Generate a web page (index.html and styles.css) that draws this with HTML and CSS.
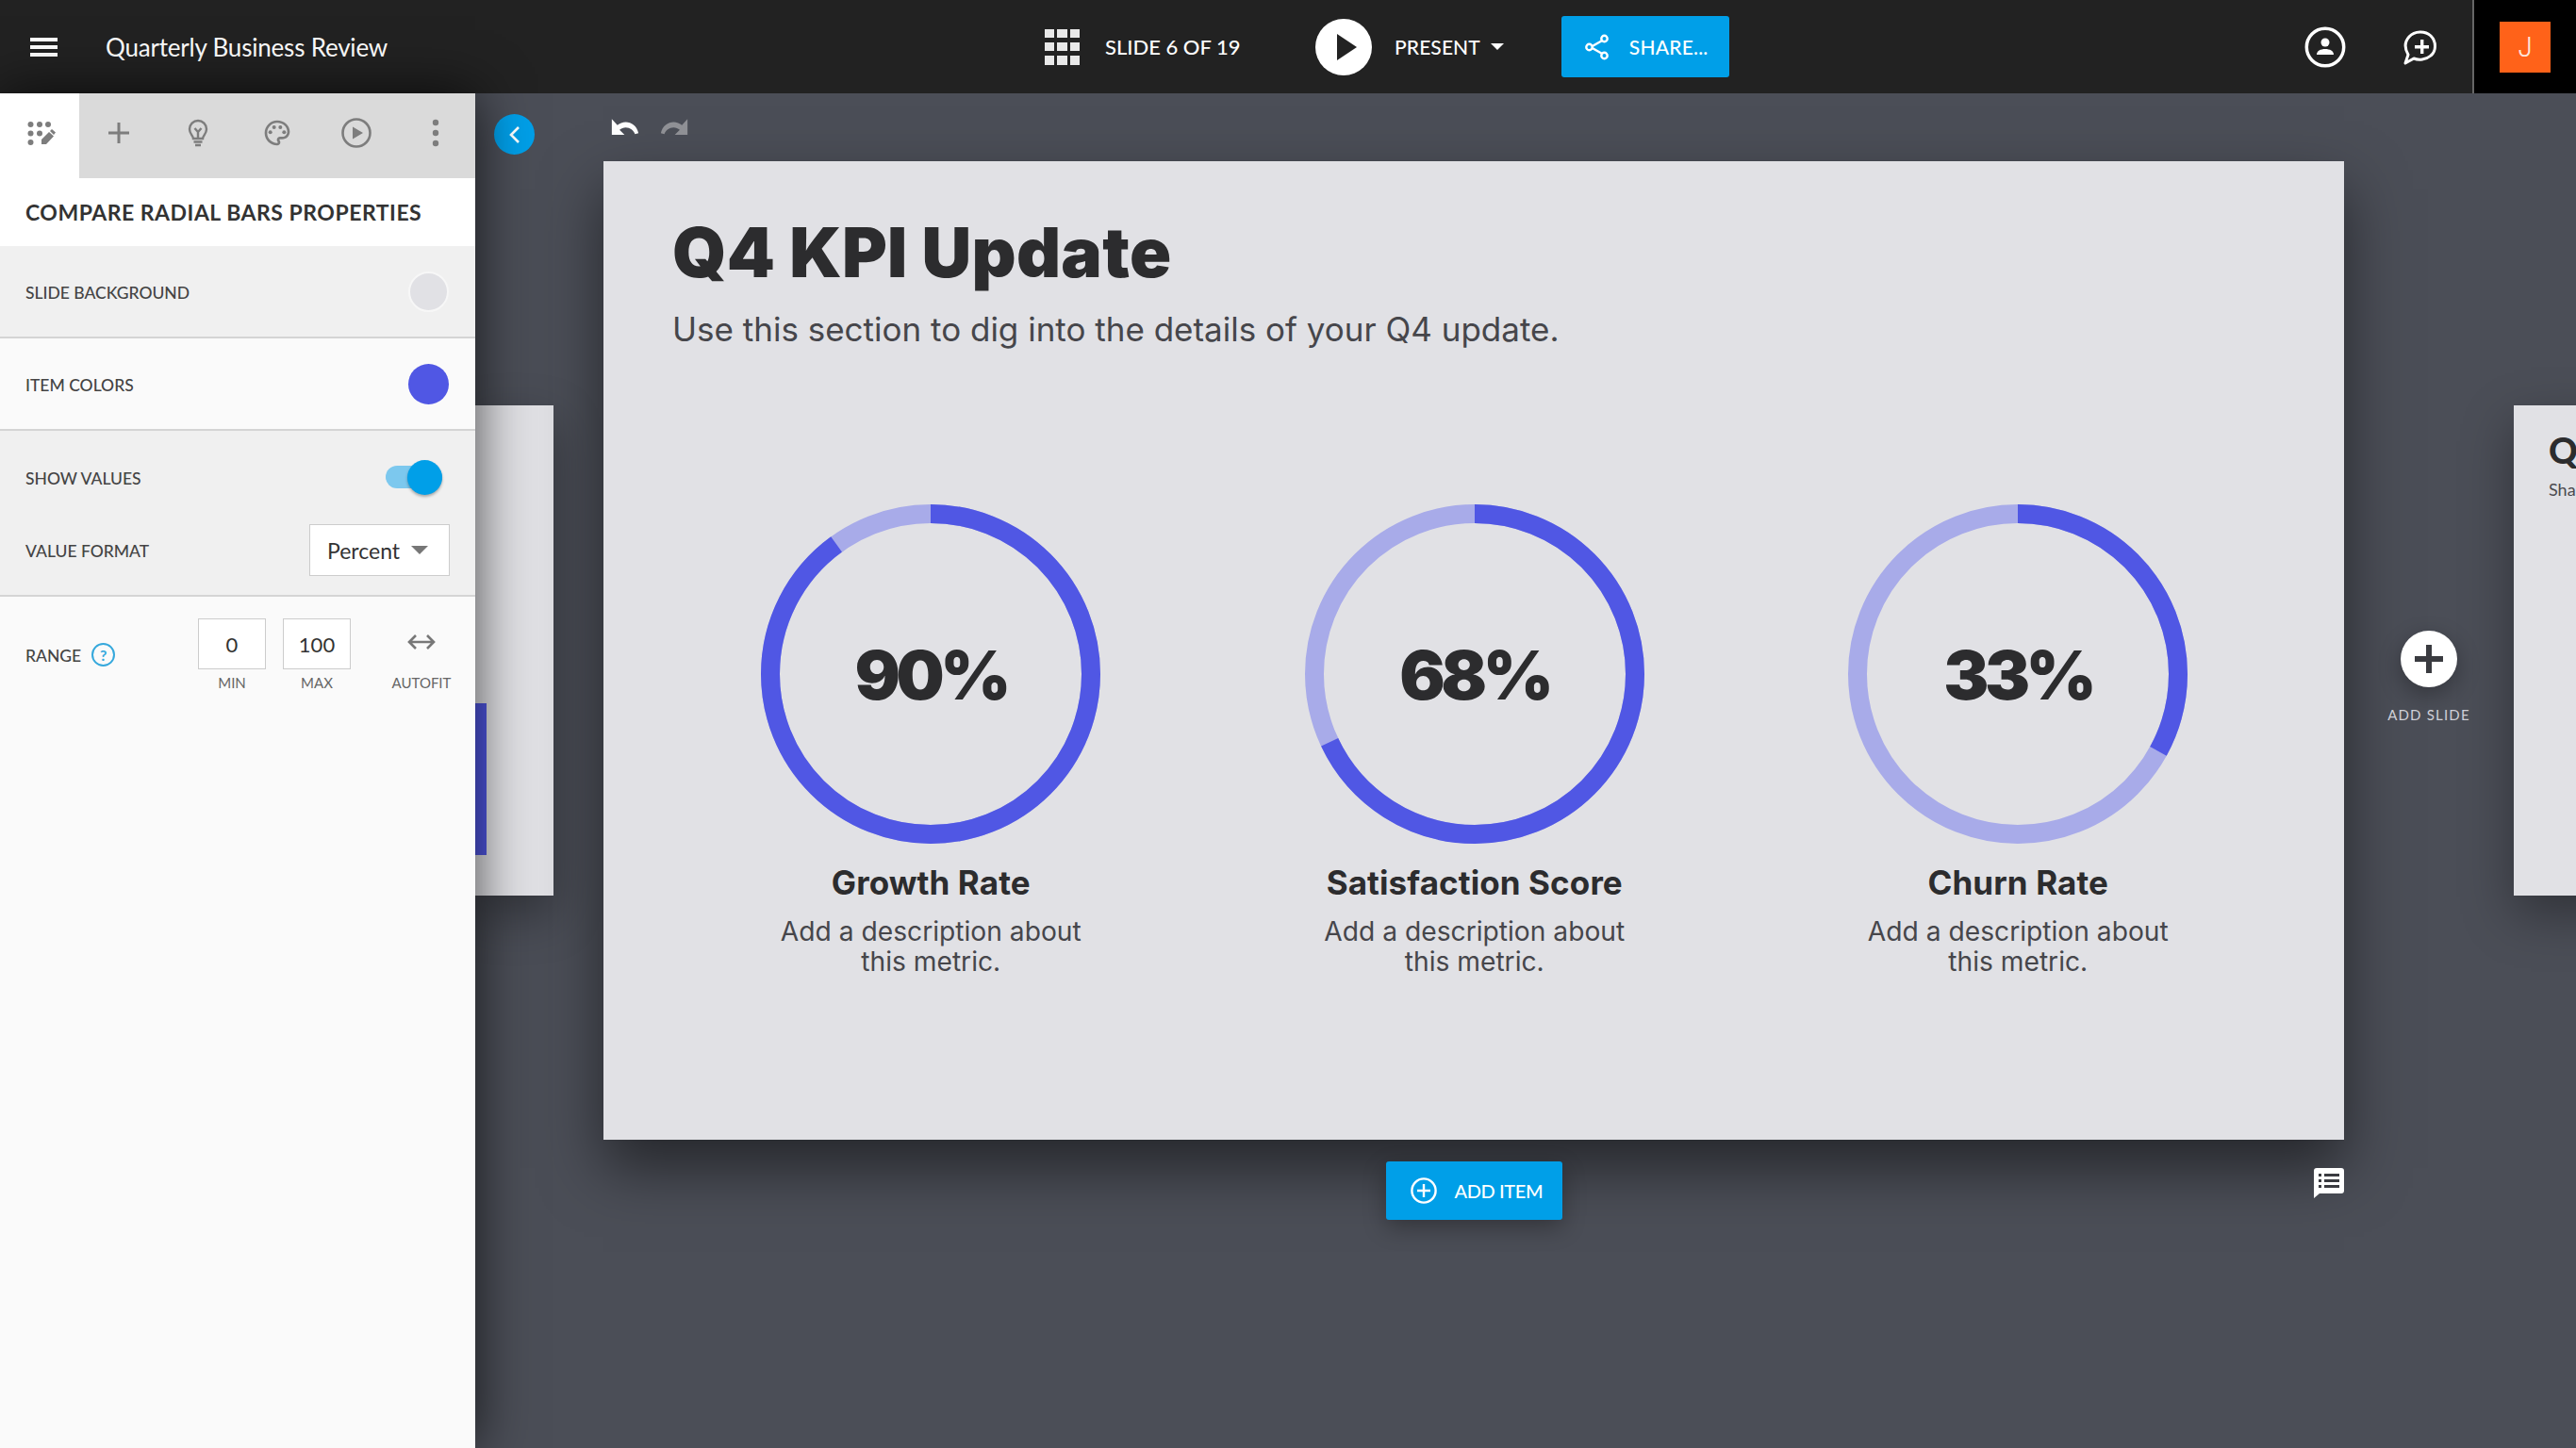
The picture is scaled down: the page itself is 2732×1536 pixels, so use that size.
FILE: index.html
```html
<!DOCTYPE html>
<html lang="en">
  <head>
    <meta charset="UTF-8" />
    <title>Quarterly Business Review</title>
    <link rel="stylesheet" href="styles.css">
  </head>

  <body>
    <header class="topbar">
      <div class="topbar-left">
        <svg class="menu-icon" viewBox="0 0 29 20"><path d="M0 0h29v4H0zM0 8h29v4H0zM0 16h29v4H0z" fill="#fff"/></svg>
        <span class="deck-title">Quarterly Business Review</span>
      </div>

      <div class="topbar-center">
        <div class="slide-grid"><i></i><i></i><i></i><i></i><i></i><i></i><i></i><i></i><i></i></div>
        <span class="slide-count">SLIDE 6 OF 19</span>
        <div class="play-circle">
          <svg viewBox="0 0 60 60"><path d="M23 16l21 14-21 14z" fill="#222"/></svg>
        </div>
        <span class="present-label">PRESENT</span>
        <span class="caret caret-white"></span>
        <button class="share-btn">
          <svg viewBox="0 0 28 28" fill="none" stroke="#fff" stroke-width="2.4">
            <path d="M21 6L7 14l14 8"/>
            <circle cx="21.500" cy="5" r="3.200" fill="#009fe8"/>
            <circle cx="5.500" cy="14" r="3.200" fill="#009fe8"/>
            <circle cx="21.500" cy="23" r="3.200" fill="#009fe8"/>
          </svg>
          SHARE...
        </button>
      </div>

      <div class="topbar-right">
        <svg class="user-icon" viewBox="0 0 44 44">
          <circle cx="22" cy="22" r="19.700" fill="none" stroke="#fff" stroke-width="3.500"/>
          <circle cx="22" cy="17" r="4.500" fill="#fff"/>
          <path d="M13 30c0-4 4-6 9-6s9 2 9 6z" fill="#fff"/>
        </svg>
        <svg class="chat-icon" viewBox="0 0 40 38">
          <path d="M3 36l3-9C2 20 2.500 13 7 8c6-6.500 17-6.500 23-1 6 6 6 16 0 21-5 4.500-13 5-18 3z" fill="none" stroke="#fff" stroke-width="3" stroke-linejoin="round"/>
          <path d="M19 11h3.400v6H28v3.400h-5.600V26H19v-5.600h-6V17h6z" fill="#fff"/>
        </svg>
        <div class="account">
          <div class="avatar">J</div>
        </div>
      </div>
    </header>

    <div class="workspace">
      <aside class="sidebar">
        <nav class="tabs">
          <div class="tab active">
            <svg viewBox="0 0 32 32" fill="#7d7d7d">
              <circle cx="6.500" cy="7" r="3"/><circle cx="16" cy="7" r="3"/><circle cx="25" cy="7" r="3"/>
              <circle cx="6.500" cy="16.500" r="3"/><circle cx="16" cy="16.500" r="3"/>
              <circle cx="6.500" cy="26" r="3"/>
              <path d="M18 28v-5l8-8 5 4.500-8 8.500zM27 14l2-2 4 3.500-2 2.500z"/>
            </svg>
          </div>
          <div class="tab">
            <svg viewBox="0 0 32 32"><path d="M14.500 5h3v9.500H27v3h-9.500V27h-3v-9.500H5v-3h9.500z" fill="#7d7d7d"/></svg>
          </div>
          <div class="tab">
            <svg viewBox="0 0 32 32" fill="none" stroke="#7d7d7d" stroke-width="2.400">
              <path d="M11 22c0-3-4-5-4-10a9 9 0 0 1 18 0c0 5-4 7-4 10z"/>
              <path d="M12.500 11l3.500 4 3.500-4M16 15v7"/>
              <path d="M11.500 25.500h9M13 29h6"/>
            </svg>
          </div>
          <div class="tab">
            <svg viewBox="0 0 24 24" fill="#7d7d7d">
              <path d="M12 22C6.490 22 2 17.510 2 12S6.490 2 12 2s10 4.040 10 9c0 3.310-2.690 6-6 6h-1.770c-.28 0-.5.22-.5.5 0 .12.05.23.13.33.41.47.64 1.060.64 1.670 0 1.380-1.120 2.500-2.500 2.500zm0-18c-4.410 0-8 3.590-8 8s3.590 8 8 8c.28 0 .5-.22.5-.5 0-.16-.08-.28-.14-.35-.41-.46-.63-1.050-.63-1.650 0-1.380 1.120-2.500 2.500-2.500H16c2.210 0 4-1.790 4-4 0-3.860-3.590-7-8-7z"/>
              <circle cx="6.500" cy="11.500" r="1.500"/><circle cx="9.500" cy="7.500" r="1.500"/>
              <circle cx="14.500" cy="7.500" r="1.500"/><circle cx="17.500" cy="11.500" r="1.500"/>
            </svg>
          </div>
          <div class="tab">
            <svg viewBox="0 0 32 32">
              <circle cx="16" cy="16" r="14.500" fill="none" stroke="#7d7d7d" stroke-width="2.600"/>
              <path d="M12 9.500l11 6.500-11 6.500z" fill="#7d7d7d"/>
            </svg>
          </div>
          <div class="tab">
            <svg viewBox="0 0 32 32" fill="#7d7d7d"><circle cx="16" cy="5" r="3.200"/><circle cx="16" cy="16" r="3.200"/><circle cx="16" cy="27" r="3.200"/></svg>
          </div>
        </nav>

        <h2 class="panel-title">COMPARE RADIAL BARS PROPERTIES</h2>

        <div class="section shaded">
          <div class="row">
            <span class="label">SLIDE BACKGROUND</span>
            <span class="swatch swatch-bg"></span>
          </div>
        </div>

        <div class="section">
          <div class="row">
            <span class="label">ITEM COLORS</span>
            <span class="swatch swatch-item"></span>
          </div>
        </div>

        <div class="section shaded section-values">
          <div class="row row-toggle">
            <span class="label">SHOW VALUES</span>
            <span class="toggle"><span class="knob"></span></span>
          </div>
          <div class="row row-format">
            <span class="label">VALUE FORMAT</span>
            <div class="select">Percent <span class="caret caret-gray"></span></div>
          </div>
        </div>

        <div class="section section-range">
          <div class="range-label">
            <span class="label">RANGE</span>
            <span class="help">?</span>
          </div>
          <div class="range-field range-min">
            <div class="num-input">0</div>
            <span class="mini-label">MIN</span>
          </div>
          <div class="range-field">
            <div class="num-input">100</div>
            <span class="mini-label">MAX</span>
          </div>
          <div class="range-field range-autofit">
            <svg viewBox="0 0 30 18" fill="none" stroke="#777" stroke-width="2.600">
              <path d="M2 9h26M9 2L2 9l7 7M21 2l7 7-7 7"/>
            </svg>
            <span class="mini-label">AUTOFIT</span>
          </div>
        </div>
      </aside>

      <main class="stage">
        <div class="stage-tools">
          <div class="collapse-btn">
            <svg viewBox="0 0 14 22" fill="none" stroke="#fff" stroke-width="2.600"><path d="M11 3L3 11l8 8"/></svg>
          </div>
          <svg class="history-icon" viewBox="0 0 24 14"><path d="M12.500 3.500c-2.650 0-5.050.99-6.900 2.600L1 1v13h10.500L7.400 9.900c1.390-1.160 3.160-1.900 5.100-1.900 3.540 0 6.550 2.310 7.600 5.500l2.900-.9C21.600 6.500 17.150 3.500 12.500 3.500z" fill="#fff"/></svg>
          <svg class="history-icon redo" viewBox="0 0 24 14"><path d="M12.500 3.500c-2.650 0-5.050.99-6.900 2.600L1 1v13h10.500L7.400 9.900c1.390-1.160 3.160-1.900 5.100-1.900 3.540 0 6.550 2.310 7.600 5.500l2.900-.9C21.600 6.500 17.150 3.500 12.500 3.500z" fill="#8f9095"/></svg>
        </div>

        <div class="carousel">
          <div class="peek peek-prev"><div class="peek-bar"></div></div>

          <section class="slide">
            <h1 class="slide-title">Q4 KPI Update</h1>
            <p class="slide-sub">Use this section to dig into the details of your Q4 update.</p>

            <div class="metrics">
              <div class="metric">
                <div class="ring">
                  <svg viewBox="0 0 360 360">
                    <circle class="ring-bg" cx="180" cy="180" r="170" pathLength="100"/>
                    <circle class="ring-fg" cx="180" cy="180" r="170" pathLength="100" stroke-dasharray="90 100"/>
                  </svg>
                  <span class="ring-value">90%</span>
                </div>
                <h3 class="metric-name">Growth Rate</h3>
                <p class="metric-desc">Add a description about<br>this metric.</p>
              </div>
              <div class="metric">
                <div class="ring">
                  <svg viewBox="0 0 360 360">
                    <circle class="ring-bg" cx="180" cy="180" r="170" pathLength="100"/>
                    <circle class="ring-fg" cx="180" cy="180" r="170" pathLength="100" stroke-dasharray="68 100"/>
                  </svg>
                  <span class="ring-value">68%</span>
                </div>
                <h3 class="metric-name">Satisfaction Score</h3>
                <p class="metric-desc">Add a description about<br>this metric.</p>
              </div>
              <div class="metric">
                <div class="ring">
                  <svg viewBox="0 0 360 360">
                    <circle class="ring-bg" cx="180" cy="180" r="170" pathLength="100"/>
                    <circle class="ring-fg" cx="180" cy="180" r="170" pathLength="100" stroke-dasharray="33 100"/>
                  </svg>
                  <span class="ring-value">33%</span>
                </div>
                <h3 class="metric-name">Churn Rate</h3>
                <p class="metric-desc">Add a description about<br>this metric.</p>
              </div>
            </div>
          </section>

          <div class="add-slide">
            <div class="add-circle">
              <svg viewBox="0 0 32 32"><path d="M13 1h6v12h12v6H19v12h-6V19H1v-6h12z" fill="#3a3b40"/></svg>
            </div>
            <span class="add-label">ADD SLIDE</span>
          </div>

          <div class="peek peek-next">
            <div class="peek-title">Q4</div>
            <div class="peek-sub">Share</div>
          </div>
        </div>

        <div class="slide-footer">
          <button class="add-item">
            <svg viewBox="0 0 28 28" fill="none" stroke="#fff" stroke-width="2.400">
              <circle cx="14" cy="14" r="12.600"/>
              <path d="M14 7v14M7 14h14"/>
            </svg>
            ADD ITEM
          </button>
          <svg class="notes-icon" viewBox="0 0 32 32">
            <path d="M3 0h26a3 3 0 0 1 3 3v21a3 3 0 0 1-3 3H6l-6 5V3a3 3 0 0 1 3-3z" fill="#fff"/>
            <path d="M5 6h3v3H5zM11 6h16v3H11zM5 12h3v3H5zM11 12h16v3H11zM5 18h3v3H5zM11 18h16v3H11z" fill="#3a3b40"/>
          </svg>
        </div>
      </main>
    </div>
  </body>
</html>
```

FILE: styles.css
```css
* {
  box-sizing: border-box;
}

body {
  margin: 0;
  width: 2732px;
  height: 1536px;
  overflow: hidden;
  display: flex;
  flex-direction: column;
  font-family: "Lato", "Noto Sans", sans-serif;
  background-color: #4b4e57;
}

/* Top bar */
.topbar {
  height: 99px;
  flex: none;
  display: flex;
  align-items: center;
  background-color: #222222;
  color: white;
}

.topbar-left {
  width: 1108px;
  display: flex;
  align-items: center;
  padding-left: 32px;
}

.menu-icon {
  width: 29px;
  height: 20px;
}

.deck-title {
  margin-left: 51px;
  font-size: 26px;
  letter-spacing: -0.2px;
}

.topbar-center {
  width: 1280px;
  display: flex;
  align-items: center;
}

.slide-grid {
  width: 37px;
  height: 38px;
  display: grid;
  grid-template-columns: repeat(3, 1fr);
  gap: 5px 3px;
}

.slide-grid i {
  background-color: #e8e8e8;
}

.slide-count {
  margin-left: 27px;
  width: 223px;
  font-size: 22px;
  font-weight: 500;
  letter-spacing: 0;
}

.play-circle {
  width: 60px;
  height: 60px;
  border-radius: 50%;
  background-color: white;
}

.play-circle svg {
  display: block;
}

.present-label {
  margin-left: 24px;
  font-size: 21px;
  font-weight: 500;
  letter-spacing: 0.1px;
}

.caret {
  width: 0;
  height: 0;
  border-left: 7px solid transparent;
  border-right: 7px solid transparent;
}

.caret-white {
  margin-left: 11px;
  border-top: 7px solid white;
}

.share-btn {
  margin-left: 61px;
  width: 178px;
  height: 65px;
  border: none;
  border-radius: 3px;
  background-color: #009fe8;
  color: white;
  display: flex;
  align-items: center;
  padding-left: 24px;
  font-family: inherit;
  font-size: 21px;
  font-weight: 500;
  letter-spacing: 0.2px;
}

.share-btn svg {
  width: 28px;
  height: 28px;
  margin-right: 20px;
}

.topbar-right {
  flex: 1;
  height: 100%;
  display: flex;
  align-items: center;
  justify-content: flex-end;
}

.user-icon {
  width: 44px;
  height: 44px;
}

.chat-icon {
  width: 40px;
  height: 38px;
  margin-left: 60px;
  margin-right: 34px;
}

.account {
  width: 110px;
  height: 100%;
  display: flex;
  align-items: center;
  justify-content: flex-end;
  padding-right: 27px;
  background-color: black;
  border-left: 2px solid #666;
}

.avatar {
  width: 54px;
  height: 54px;
  background-color: #ff6219;
  color: #fde6da;
  font-family: "Inter", sans-serif;
  font-size: 28px;
  font-weight: 300;
  display: flex;
  align-items: center;
  justify-content: center;
}

/* Sidebar */
.workspace {
  flex: 1;
  min-height: 0;
  display: flex;
}

.sidebar {
  width: 504px;
  flex: none;
  position: relative;
  z-index: 2;
  background-color: #fafafa;
  box-shadow: 0 0 55px rgba(0, 0, 0, 0.7);
}

.tabs {
  height: 90px;
  display: flex;
  background-color: #dadada;
}

.tab {
  width: 84px;
  display: flex;
  align-items: center;
  justify-content: center;
  padding-bottom: 6px;
}

.tab svg {
  width: 32px;
  height: 32px;
  overflow: visible;
}

.tab.active {
  background-color: white;
}

.panel-title {
  height: 72px;
  margin: 0;
  padding-left: 27px;
  background-color: white;
  color: #333;
  font-size: 23px;
  font-weight: 700;
  letter-spacing: 0.5px;
  line-height: 72px;
}

.section {
  border-bottom: 2px solid #d4d4d4;
  background-color: #fafafa;
}

.section.shaded {
  background-color: #f0f0f0;
}

.row {
  height: 96px;
  display: flex;
  align-items: center;
  justify-content: space-between;
  padding: 0 27px;
}

.label {
  margin-top: 2px;
  font-size: 17.5px;
  font-weight: 500;
  color: #444;
}

.swatch {
  width: 43px;
  height: 43px;
  margin-right: 1px;
  border-radius: 50%;
}

.swatch-bg {
  background-color: #e1e1e5;
  border: 2px solid #f7f7f7;
}

.swatch-item {
  background-color: #5057e4;
}

.section-values {
  height: 176px;
  padding-top: 12px;
}

.row-toggle {
  height: 74px;
  padding-right: 35px;
}

.row-format {
  height: 81px;
}

.toggle {
  width: 60px;
  height: 24px;
  border-radius: 12px;
  background-color: #7cc8ee;
  display: flex;
  align-items: center;
  justify-content: flex-end;
}

.knob {
  width: 37px;
  height: 37px;
  flex: none;
  border-radius: 50%;
  background-color: #009fe8;
  box-shadow: 0 2px 3px rgba(0, 0, 0, 0.3);
}

.select {
  width: 149px;
  height: 55px;
  display: flex;
  align-items: center;
  justify-content: space-between;
  padding: 0 22px 0 18px;
  border: 1px solid #ccc;
  background-color: white;
  color: #333;
  font-size: 23px;
}

.caret-gray {
  border-left-width: 9px;
  border-right-width: 9px;
  border-top: 9px solid #777;
}

.section-range {
  border-bottom: none;
  display: flex;
  padding: 23px 27px 0;
}

.range-label {
  width: 183px;
  height: 50px;
  margin-top: 13px;
  display: flex;
  align-items: center;
  gap: 11px;
}

.help {
  width: 25px;
  height: 25px;
  border: 2px solid #35a8dc;
  border-radius: 50%;
  color: #35a8dc;
  font-size: 16px;
  font-weight: 700;
  text-align: center;
  line-height: 21px;
}

.range-field {
  width: 72px;
  display: flex;
  flex-direction: column;
  align-items: center;
}

.range-min {
  margin-right: 18px;
}

.range-autofit {
  width: 60px;
  margin-left: 45px;
}

.range-autofit svg {
  width: 30px;
  height: 18px;
  margin: 16px 0 20px;
}

.num-input {
  width: 72px;
  height: 54px;
  display: flex;
  align-items: center;
  justify-content: center;
  border: 1px solid #ccc;
  background-color: white;
  color: #333;
  font-size: 22px;
}

.mini-label {
  margin-top: 5px;
  color: #666;
  font-size: 15px;
  white-space: nowrap;
}

/* Stage */
.stage {
  flex: 1;
  min-width: 0;
  overflow: hidden;
  background-color: #4b4e57;
}

.stage-tools {
  height: 72px;
  display: flex;
  align-items: flex-start;
  padding-left: 20px;
}

.collapse-btn {
  width: 43px;
  height: 43px;
  margin-top: 22px;
  border-radius: 50%;
  background-color: #009fe8;
  display: flex;
  align-items: center;
  justify-content: center;
}

.collapse-btn svg {
  width: 14px;
  height: 22px;
}

.history-icon {
  width: 32px;
  height: 18px;
  margin-top: 26px;
  margin-left: 80px;
}

.redo {
  margin-left: 20px;
  transform: scaleX(-1);
}

.carousel {
  width: 2500px;
  height: 1038px;
  display: flex;
  align-items: center;
}

.peek {
  height: 520px;
  flex: none;
  background-color: #e1e1e5;
  box-shadow: 0 20px 50px rgba(0, 0, 0, 0.35);
}

.peek-prev {
  width: 83px;
  margin-right: 53px;
  padding-top: 316px;
}

.peek-bar {
  width: 12px;
  height: 161px;
  background-color: #5057e4;
}

.peek-next {
  width: 300px;
  padding: 24px 0 0 37px;
}

.peek-title {
  color: #2c2c2e;
  font-size: 38px;
  font-weight: 900;
  line-height: 46px;
}

.peek-sub {
  margin-top: 8px;
  color: #4a4a4f;
  font-size: 18px;
}

.slide {
  width: 1846px;
  height: 1038px;
  flex: none;
  padding: 52px 59px 0;
  background-color: #e1e1e5;
  color: #2c2c2e;
  font-family: "Inter", "Liberation Sans", sans-serif;
  box-shadow: 0 30px 60px rgba(0, 0, 0, 0.5);
}

.slide-title {
  margin: 0 0 0 14px;
  font-size: 73px;
  font-weight: 900;
  line-height: 90px;
  letter-spacing: 0.3px;
}

.slide-sub {
  margin: 14px 0 0 14px;
  color: #46464b;
  font-size: 35px;
  line-height: 44px;
}

.metrics {
  margin-top: 164px;
  display: grid;
  grid-template-columns: repeat(3, 576.5px);
}

.metric {
  display: flex;
  flex-direction: column;
  align-items: center;
  text-align: center;
}

.ring {
  position: relative;
  width: 360px;
  height: 360px;
}

.ring svg {
  display: block;
  transform: rotate(-90deg);
}

.ring circle {
  fill: none;
  stroke-width: 20;
}

.ring-bg {
  stroke: #a8abe9;
}

.ring-fg {
  stroke: #5057e4;
}

.ring-value {
  position: absolute;
  inset: 0;
  display: flex;
  align-items: center;
  justify-content: center;
  font-size: 72px;
  font-weight: 900;
  letter-spacing: -4.5px;
}

.metric-name {
  margin: 19px 0 0;
  font-size: 35px;
  font-weight: 700;
  line-height: 44px;
  letter-spacing: 0.1px;
}

.metric-desc {
  margin: 14px 0 0;
  color: #46464b;
  font-size: 28.2px;
  line-height: 32px;
}

.add-slide {
  width: 180px;
  flex: none;
  align-self: flex-start;
  margin-top: 498px;
  display: flex;
  flex-direction: column;
  align-items: center;
}

.add-circle {
  width: 60px;
  height: 60px;
  border-radius: 50%;
  background-color: white;
  box-shadow: 0 8px 24px rgba(0, 0, 0, 0.3);
  display: flex;
  align-items: center;
  justify-content: center;
}

.add-circle svg {
  width: 32px;
  height: 32px;
}

.add-label {
  margin-top: 20px;
  color: #d0d0d8;
  font-size: 15px;
  letter-spacing: 1.2px;
}

.slide-footer {
  width: 1846px;
  margin: 23px 0 0 136px;
  display: grid;
  grid-template-columns: 1fr auto 1fr;
  align-items: start;
}

.add-item {
  grid-column: 2;
  width: 187px;
  height: 62px;
  display: flex;
  align-items: center;
  padding-left: 26px;
  border: none;
  border-radius: 3px;
  background-color: #009fe8;
  color: white;
  font-family: inherit;
  font-size: 20px;
  font-weight: 500;
  letter-spacing: -0.4px;
  box-shadow: 0 8px 24px rgba(0, 0, 0, 0.3);
}

.add-item svg {
  width: 28px;
  height: 28px;
  margin-right: 19px;
}

.notes-icon {
  grid-column: 3;
  justify-self: end;
  width: 32px;
  height: 32px;
  margin-top: 7px;
}
```
